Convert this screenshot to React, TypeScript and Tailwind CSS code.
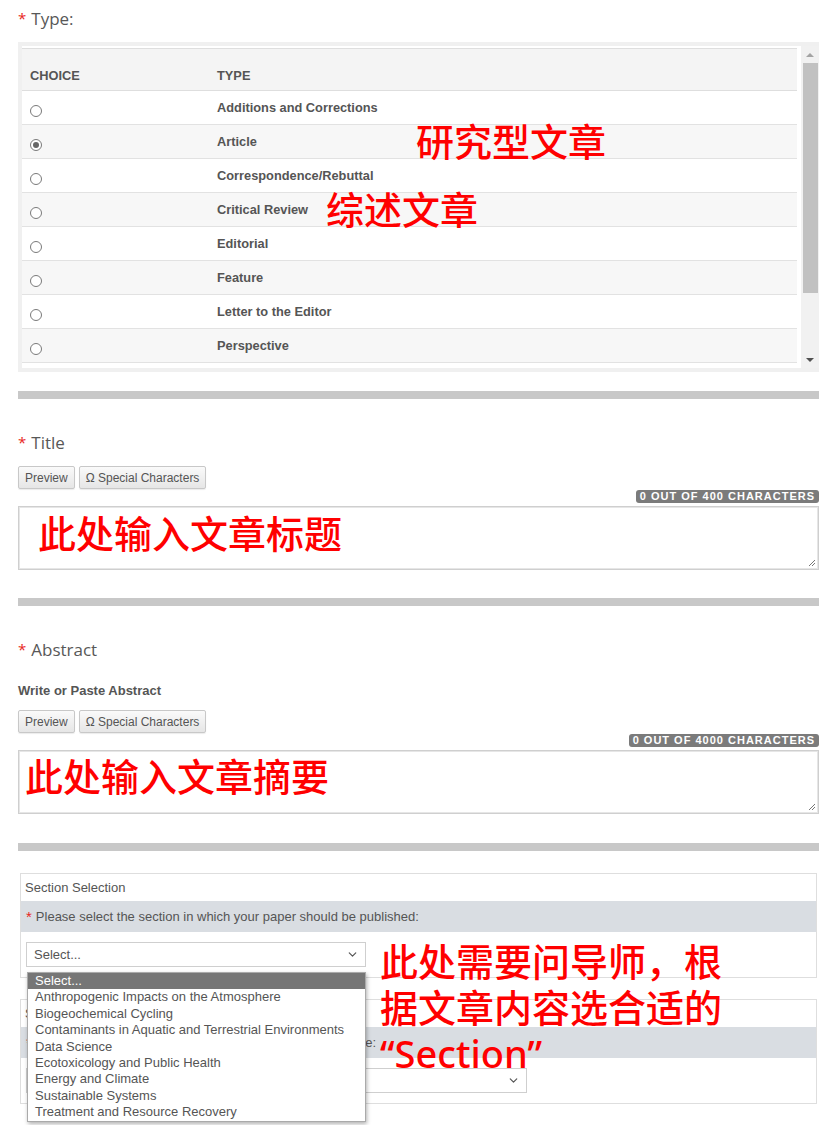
import { ChevronDown } from "lucide-react";

const TYPES = [
  "Additions and Corrections",
  "Article",
  "Correspondence/Rebuttal",
  "Critical Review",
  "Editorial",
  "Feature",
  "Letter to the Editor",
  "Perspective",
];

const SECTIONS = [
  "Anthropogenic Impacts on the Atmosphere",
  "Biogeochemical Cycling",
  "Contaminants in Aquatic and Terrestrial Environments",
  "Data Science",
  "Ecotoxicology and Public Health",
  "Energy and Climate",
  "Sustainable Systems",
  "Treatment and Resource Recovery",
];

const Label = ({ text }: { text: string }) => (
  <div className="flex items-center h-[26px] font-['Open_Sans',sans-serif] text-[17px] text-[#585858]">
    <span className="text-[#e8261c] text-[15px] self-start mt-[1px] mr-[5px]">*</span>
    {text}
  </div>
);

const Radio = ({ checked }: { checked?: boolean }) => (
  <span className="flex items-center justify-center w-[12px] h-[12px] rounded-full border border-[#7a7a7a] bg-white">
    {checked && <span className="w-[6px] h-[6px] rounded-full bg-[#666]" />}
  </span>
);

const EditorButtons = () => (
  <div className="flex gap-[4px] h-[23px]">
    <button className="px-[6px] text-[12px] text-[#555] border border-[#c8c8c8] rounded-[2px] bg-gradient-to-b from-[#fafafa] to-[#e6e6e6] shadow-[0_1px_1px_rgba(0,0,0,0.08)]">
      Preview
    </button>
    <button className="px-[6px] text-[12px] text-[#555] border border-[#c8c8c8] rounded-[2px] bg-gradient-to-b from-[#fafafa] to-[#e6e6e6] shadow-[0_1px_1px_rgba(0,0,0,0.08)]">
      Ω Special Characters
    </button>
  </div>
);

const Counter = ({ max }: { max: number }) => (
  <div className="flex justify-end h-[13px] mt-[1px]">
    <span className="bg-[#7b7b7b] text-white text-[11px] font-bold leading-[13px] tracking-[1px] px-[4px] rounded-[3px]">
      0 OUT OF {max} CHARACTERS
    </span>
  </div>
);

const TextBox = () => (
  <div className="relative mt-[3px] h-[64px] border border-[#cfcfcf] shadow-[inset_0_0_0_1px_#e6e6e6] bg-white">
    <svg className="absolute right-[2px] bottom-[2px]" width="9" height="9" viewBox="0 0 9 9">
      <path d="M8 2 L2 8 M8 5 L5 8" stroke="#777" strokeWidth="1" />
    </svg>
  </div>
);

const Divider = ({ className }: { className: string }) => (
  <div className={`h-[8px] bg-[#c8c8c8] ${className}`} />
);

const SectionBox = ({ prompt, wide }: { prompt: string; wide?: boolean }) => (
  <div className="ml-[2px] w-[797px] border border-[#dedede] text-[13px] text-[#555]">
    <div className="h-[27px] flex items-center pl-[4px]">Section Selection</div>
    <div className="h-[31px] flex items-center pl-[5px] bg-[#d9dde2]">
      <span className="text-[#e8261c] text-[15px] self-start mt-[5px] mr-[4px]">*</span>
      {prompt}
    </div>
    <div className="pt-[10px] pb-[10px] pl-[5px]">
      <div
        className={`h-[25px] border border-[#cfcfcf] flex items-center justify-between pl-[7px] pr-[6px] ${
          wide ? "w-[501px]" : "w-[340px]"
        }`}
      >
        <span>Select...</span>
        <ChevronDown size={13} strokeWidth={2.2} className="text-[#555]" />
      </div>
    </div>
  </div>
);

export default function App() {
  return (
    <div className="relative w-[823px] h-[1125px] overflow-hidden bg-white font-['Liberation_Sans',Arial,sans-serif]">
      <div className="pl-[18px] pr-[4px]">
        <div className="h-[38px] flex items-center">
          <Label text="Type:" />
        </div>

        <div className="mt-[4px] h-[330px] bg-[#f0f0f0] flex pt-[4px] pl-[4px] pb-[4px]">
          <div className="flex-1 bg-white overflow-hidden pt-[2px] pr-[4px]">
            <div className="grid grid-cols-[187px_1fr] h-[43px] bg-[#f4f4f4] border-t border-b border-[#dedede] text-[12.8px] font-bold text-[#555]">
              <div className="pl-[8px] pt-[17px]">CHOICE</div>
              <div className="pl-[8px] pt-[17px]">TYPE</div>
            </div>
            {TYPES.map((t, i) => (
              <div
                key={t}
                className={`grid grid-cols-[187px_1fr] h-[34px] border-b border-[#e2e2e2] text-[12.8px] font-bold text-[#555] ${
                  i % 2 === 1 ? "bg-[#f7f7f7]" : "bg-white"
                }`}
              >
                <div className="pl-[8px] flex items-center pt-[6px]">
                  <Radio checked={t === "Article"} />
                </div>
                <div className="pl-[8px] flex items-center pt-[1px]">{t}</div>
              </div>
            ))}
            <div className="h-[6px] bg-white" />
          </div>
          <div className="w-[18px] flex flex-col items-center bg-[#f1f1f1]">
            <div className="h-[17px] flex items-center justify-center">
              <span className="w-0 h-0 border-l-[4px] border-r-[4px] border-b-[4px] border-l-transparent border-r-transparent border-b-[#a3a3a3]" />
            </div>
            <div className="w-[15px] h-[230px] bg-[#c1c1c1]" />
            <div className="flex-1" />
            <div className="h-[17px] flex items-center justify-center">
              <span className="w-0 h-0 border-l-[4px] border-r-[4px] border-t-[4px] border-l-transparent border-r-transparent border-t-[#505050]" />
            </div>
          </div>
        </div>

        <Divider className="mt-[19px]" />

        <div className="mt-[31px]">
          <Label text="Title" />
        </div>
        <div className="mt-[10px]">
          <EditorButtons />
        </div>
        <Counter max={400} />
        <TextBox />

        <Divider className="mt-[28px]" />

        <div className="mt-[31px]">
          <Label text="Abstract" />
        </div>
        <div className="mt-[20px] h-[16px] flex items-center text-[13px] font-bold text-[#555]">
          Write or Paste Abstract
        </div>
        <div className="mt-[11px]">
          <EditorButtons />
        </div>
        <Counter max={4000} />
        <TextBox />

        <Divider className="mt-[29px]" />

        <div className="mt-[22px]">
          <SectionBox prompt="Please select the section in which your paper should be published:" />
        </div>
        <div className="mt-[21px]">
          <SectionBox prompt="Please select the special issue for your paper, if applicable:" wide />
        </div>
      </div>

      {/* open dropdown list */}
      <div className="absolute left-[27px] top-[972px] w-[339px] bg-white border border-[#aaa] shadow-[1px_2px_4px_rgba(0,0,0,0.3)] text-[13px] text-[#555] leading-[16.4px]">
        <div className="bg-[#767676] text-white pl-[7px]">Select...</div>
        {SECTIONS.map((s) => (
          <div key={s} className="pl-[7px]">
            {s}
          </div>
        ))}
      </div>

      {/* red annotations */}
      <div className="absolute inset-0 pointer-events-none font-['Noto_Sans_CJK_SC',sans-serif] font-medium text-[#ff0000] text-[38px] leading-[38px]">
        <div className="absolute left-[416px] top-[121px]">研究型文章</div>
        <div className="absolute left-[326px] top-[189px]">综述文章</div>
        <div className="absolute left-[38px] top-[513px]">此处输入文章标题</div>
        <div className="absolute left-[25px] top-[756px]">此处输入文章摘要</div>
        <div className="absolute left-[380px] top-[937px] leading-[46px]">
          此处需要问导师，根
          <br />
          据文章内容选合适的
          <br />
          <span className="font-['Noto_Sans',sans-serif] font-medium">“Section”</span>
        </div>
      </div>
    </div>
  );
}
